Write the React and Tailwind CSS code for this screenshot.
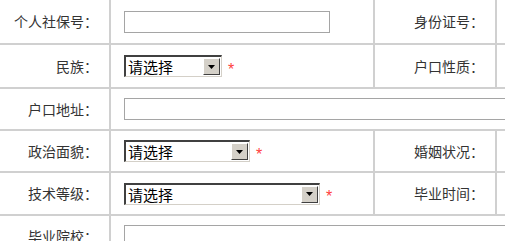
import React from "react";

const font = { fontFamily: '"Noto Sans CJK SC", "Noto Sans", sans-serif' };

function Label({ children }) {
  return (
    <div className="bg-white flex items-center justify-end pr-[11px] text-[14px] text-[#333]">
      {children}
    </div>
  );
}

function Select({ w }) {
  return (
    <div className="flex items-center">
      <div
        className={`${w} h-[22px] bg-white flex items-center border-t-2 border-l-2 border-t-[#404040] border-l-[#404040] border-b border-r border-b-[#d4d0c8] border-r-[#d4d0c8]`}
      >
        <span className="flex-1 pl-[2px] text-[15px] leading-none text-black">请选择</span>
        <div className="w-[17px] h-[17px] mr-[1px] bg-[#d4d0c8] border border-t-white border-l-white border-b-[#404040] border-r-[#404040] flex items-center justify-center">
          <svg width="7" height="4" viewBox="0 0 7 4">
            <polygon points="0,0 7,0 3.5,4" fill="#000" />
          </svg>
        </div>
      </div>
      <span
        className="ml-[6px] pt-[7px] text-[16px] text-[#ff4040] leading-none"
        style={{ fontFamily: '"Liberation Sans", sans-serif' }}
      >
        *
      </span>
    </div>
  );
}

function Input({ w }) {
  return <div className={`${w} h-[22px] bg-white border border-[#a5a5a5]`} />;
}

function Field({ children, span }) {
  return (
    <div className={`bg-white flex items-center pl-[13px] ${span ? "col-span-3" : ""}`}>
      {children}
    </div>
  );
}

export default function App() {
  return (
    <div className="w-[505px] h-[241px] overflow-hidden bg-white" style={font}>
      <div className="w-[640px] grid grid-cols-[109px_262px_120px_1fr] grid-rows-[43px_42px_40px_40px_41px_40px] gap-[2px] bg-[#d0d0d0]">
        <Label>个人社保号：</Label>
        <Field><Input w="w-[206px]" /></Field>
        <Label>身份证号：</Label>
        <div className="bg-white" />

        <Label>民族：</Label>
        <Field><Select w="w-[98px]" /></Field>
        <Label>户口性质：</Label>
        <div className="bg-white" />

        <Label>户口地址：</Label>
        <Field span><Input w="w-[500px]" /></Field>

        <Label>政治面貌：</Label>
        <Field><Select w="w-[126px]" /></Field>
        <Label>婚姻状况：</Label>
        <div className="bg-white" />

        <Label>技术等级：</Label>
        <Field><Select w="w-[196px]" /></Field>
        <Label>毕业时间：</Label>
        <div className="bg-white" />

        <Label>毕业院校：</Label>
        <Field span><Input w="w-[500px]" /></Field>
      </div>
    </div>
  );
}
